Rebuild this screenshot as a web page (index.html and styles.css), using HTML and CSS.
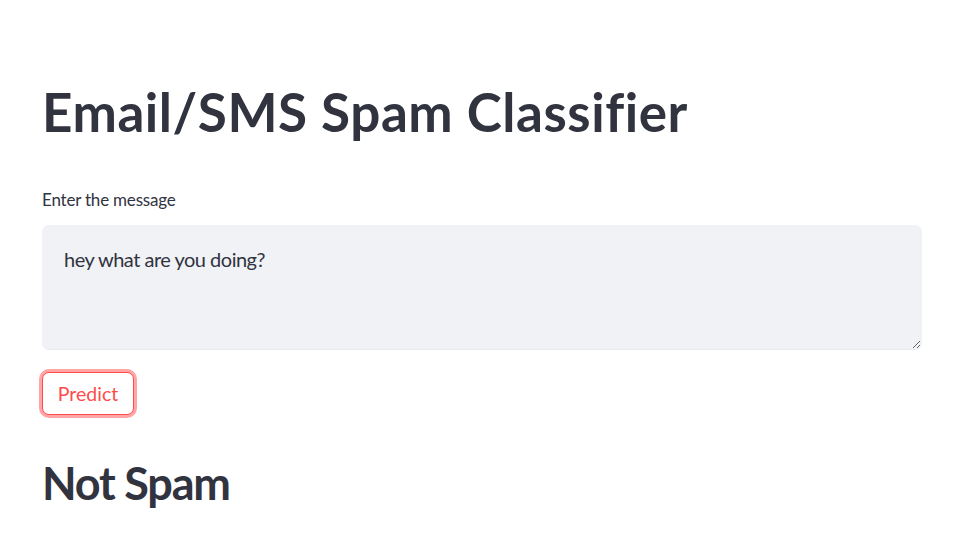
FILE: index.html
```html
<!DOCTYPE html>
<html lang="en">
<head>
<meta charset="utf-8">
<title>Email/SMS Spam Classifier</title>
<link rel="stylesheet" href="styles.css">
</head>
<body>
<main class="main">
  <h1 class="title">Email/SMS Spam Classifier</h1>
  <label class="field-label" for="msg">Enter the message</label>
  <textarea id="msg" class="message">hey what are you doing?</textarea>
  <div class="actions">
    <button class="predict" type="button">Predict</button>
  </div>
  <h2 class="result">Not Spam</h2>
</main>
</body>
</html>
```

FILE: styles.css
```css
html, body {
  margin: 0;
  padding: 0;
  background: #ffffff;
}
body {
  font-family: Lato, "Noto Sans", sans-serif;
  color: #31333f;
}
.main {
  display: flex;
  flex-direction: column;
  align-items: flex-start;
  width: 880px;
  padding: 81px 0 0 42px;
}
.title {
  margin: 0;
  font-size: 53px;
  line-height: 62px;
  font-weight: 700;
  letter-spacing: 0.55px;
  color: #31333f;
}
.field-label {
  margin-top: 46px;
  font-size: 17px;
  line-height: 21px;
  letter-spacing: -0.2px;
  color: #31333f;
}
.message {
  box-sizing: border-box;
  margin-top: 15px;
  width: 880px;
  height: 125px;
  padding: 19px 21px;
  border: 1px solid #f0f2f6;
  border-bottom-color: #e8ebf0;
  border-radius: 7px;
  background: #f0f2f6;
  font-family: Lato, "Noto Sans", sans-serif;
  font-size: 20px;
  line-height: 28px;
  letter-spacing: -0.5px;
  color: #31333f;
  resize: vertical;
  outline: none;
}
.actions {
  margin-top: 22px;
  display: flex;
}
.predict {
  box-sizing: border-box;
  width: 92px;
  height: 43px;
  border: 1px solid #ff4b4b;
  border-radius: 7px;
  background: #ffffff;
  color: #ff4b4b;
  font-family: Lato, "Noto Sans", sans-serif;
  font-size: 19.5px;
  box-shadow: 0 0 0 3px rgba(255, 75, 75, 0.5);
  padding: 0;
}
.result {
  margin: 41px 0 0;
  font-size: 45px;
  line-height: 54px;
  font-weight: 700;
  letter-spacing: -1.2px;
  color: #31333f;
}
```
